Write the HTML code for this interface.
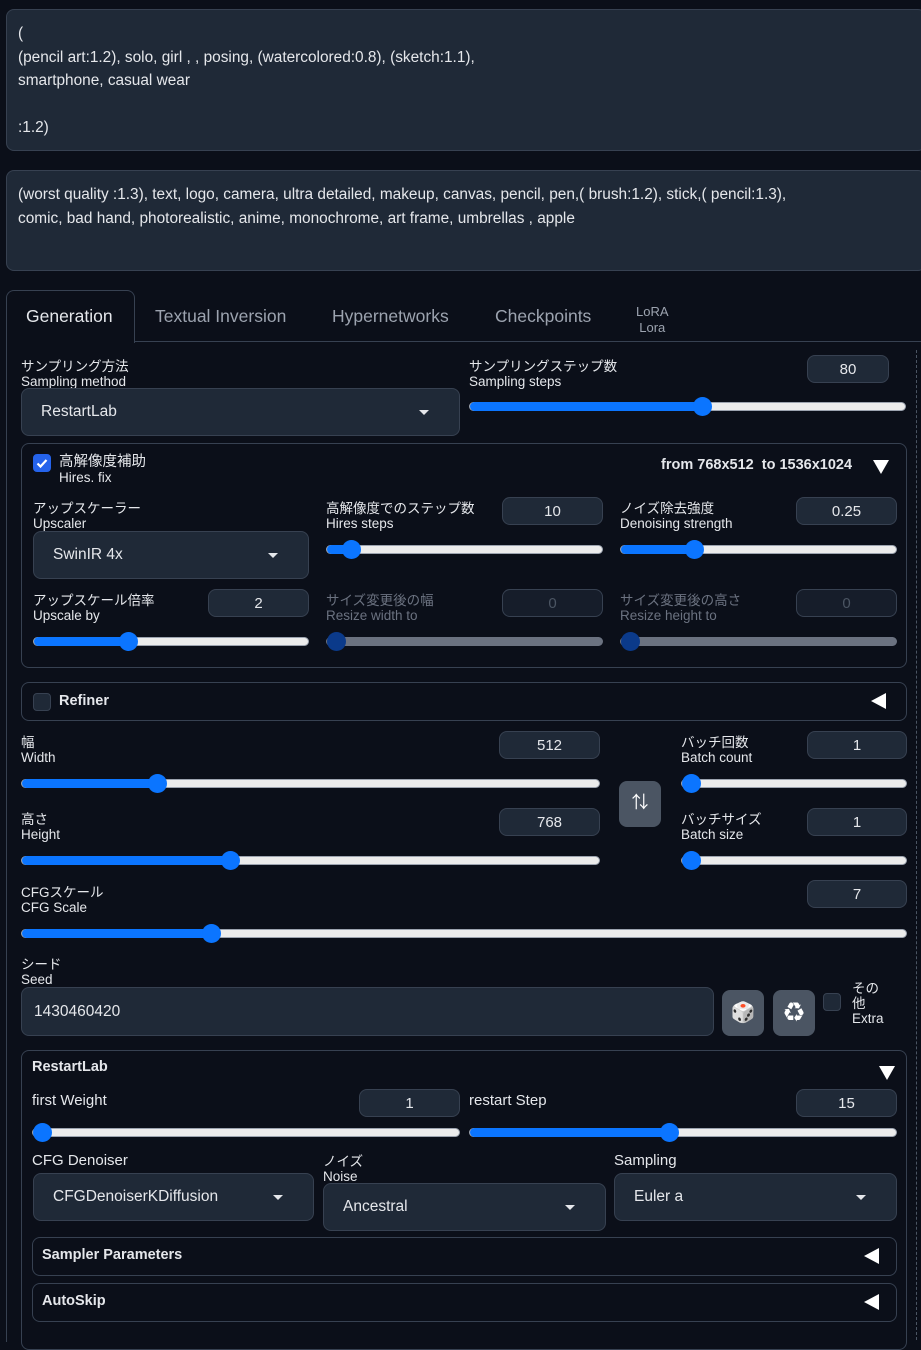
<!DOCTYPE html>
<html><head><meta charset="utf-8"><style>
*{box-sizing:border-box;margin:0;padding:0}
body{width:921px;height:1339px;background:#0b0f19;color:#e5e7eb;font-family:"Liberation Sans","Noto Sans CJK JP",sans-serif;position:relative;overflow:hidden}
.a{position:absolute}
.box{position:absolute;background:#1f2937;border:1px solid #374151;border-radius:8px}
.pbox{position:absolute;background:#1f2937;border:1px solid #374151;border-radius:8px;padding:12px 11px;font-size:15.4px;line-height:23.5px;color:#e5e7eb}
.frame{position:absolute;border:1px solid #374151;border-radius:8px}
.l{position:absolute;font-size:13.5px;line-height:15px;color:#e5e7eb}
.l.g{color:#6b7280}
.num{position:absolute;background:#1f2937;border:1px solid #374151;border-radius:8px;height:28px;text-align:center;font-size:15px;line-height:28px}
.num.g{color:#4b5563;background:#161d2a}
.tr{position:absolute;height:9px;background:#ececec;border-radius:5px;border:1px solid #9ca3af}
.tr i{position:absolute;left:0;top:-1px;height:9px;background:#0b75ff;border-radius:5px}
.tr b{position:absolute;top:-6px;width:19px;height:19px;margin-left:-9px;border-radius:50%;background:#0b75ff}
.tr.g{background:#6b7280;border-color:#6b7280}
.tr.g b{background:#0b3a8a}
.dd{position:absolute;background:#1f2937;border:1px solid #374151;border-radius:8px;height:48px;font-size:15.5px;line-height:46px;padding-left:19px}
.dd:after{content:"";position:absolute;right:30px;top:21px;border-left:5px solid transparent;border-right:5px solid transparent;border-top:5px solid #e5e7eb}
.cb{position:absolute;width:18px;height:18px;border-radius:4px;background:#1f2937;border:1px solid #374151}
.tl{position:absolute;width:0;height:0;border-top:8px solid transparent;border-bottom:8px solid transparent;border-right:15px solid #fff}
.td{position:absolute;width:0;height:0;border-left:8px solid transparent;border-right:8px solid transparent;border-top:14px solid #fff}
.btn{position:absolute;background:#4b5563;border-radius:8px;text-align:center;color:#fff}
.bold{font-weight:bold}
</style></head><body>

<div class="pbox" style="left:6px;top:9px;width:920px;height:142px">(<br>(pencil art:1.2), solo, girl , , posing, (watercolored:0.8), (sketch:1.1),<br>smartphone, casual wear<br><br>:1.2)</div>
<div class="pbox" style="left:6px;top:170px;width:920px;height:101px;padding-top:12px">(worst quality :1.3), text, logo, camera, ultra detailed, makeup, canvas, pencil, pen,( brush:1.2), stick,( pencil:1.3),<br>comic, bad hand, photorealistic,  anime, monochrome, art frame, umbrellas , apple</div>

<!-- tabs -->
<div class="a" style="left:134px;top:341px;width:787px;height:1px;background:#374151"></div>
<div class="a" style="left:6px;top:290px;width:129px;height:53px;border:1px solid #374151;border-bottom:none;border-radius:8px 8px 0 0;background:#0b0f19"></div>
<div class="a" style="left:26px;top:306px;font-size:17.5px;color:#e5e7eb">Generation</div>
<div class="a" style="left:155px;top:306px;font-size:17.5px;color:#9ca3af">Textual Inversion</div>
<div class="a" style="left:332px;top:306px;font-size:17.5px;color:#9ca3af">Hypernetworks</div>
<div class="a" style="left:495px;top:306px;font-size:17.5px;color:#9ca3af">Checkpoints</div>
<div class="a" style="left:636px;top:304px;font-size:13px;line-height:16px;color:#9ca3af;text-align:center">LoRA<br>Lora</div>
<div class="a" style="left:6px;top:342px;width:1px;height:1000px;background:#374151"></div>
<div class="a" style="left:916px;top:350px;width:0;height:990px;border-left:1px dashed #4b5563"></div>

<!-- sampling -->
<div class="l" style="left:21px;top:359px">サンプリング方法<br>Sampling method</div>
<div class="dd" style="left:21px;top:388px;width:439px">RestartLab</div>
<div class="l" style="left:469px;top:359px">サンプリングステップ数<br>Sampling steps</div>
<div class="num" style="left:807px;top:355px;width:82px">80</div>
<div class="tr" style="left:469px;top:402px;width:437px"><i style="width:232px"></i><b style="left:232px"></b></div>

<!-- hires -->
<div class="frame" style="left:21px;top:443px;width:886px;height:225px"></div>
<div class="cb" style="left:33px;top:454px;background:#2563eb;border-color:#2563eb"><svg width="16" height="16" viewBox="0 0 16 16"><path d="M3.5 8.5l3 3 6-6.5" stroke="#fff" stroke-width="2.2" fill="none"/></svg></div>
<div class="l" style="left:59px;top:455px;font-size:14.5px">高解像度補助<br><span style="font-size:13.5px">Hires. fix</span></div>
<div class="a bold" style="left:661px;top:457px;font-size:14.5px">from 768x512&nbsp; to 1536x1024</div>
<div class="td" style="left:873px;top:460px"></div>

<div class="l" style="left:33px;top:501px">アップスケーラー<br>Upscaler</div>
<div class="dd" style="left:33px;top:531px;width:276px">SwinIR 4x</div>
<div class="l" style="left:326px;top:501px">高解像度でのステップ数<br>Hires steps</div>
<div class="num" style="left:502px;top:497px;width:101px">10</div>
<div class="tr" style="left:326px;top:545px;width:277px"><i style="width:24px"></i><b style="left:24px"></b></div>
<div class="l" style="left:620px;top:501px">ノイズ除去強度<br>Denoising strength</div>
<div class="num" style="left:796px;top:497px;width:101px">0.25</div>
<div class="tr" style="left:620px;top:545px;width:277px"><i style="width:73px"></i><b style="left:73px"></b></div>

<div class="l" style="left:33px;top:593px">アップスケール倍率<br>Upscale by</div>
<div class="num" style="left:208px;top:589px;width:101px">2</div>
<div class="tr" style="left:33px;top:637px;width:276px"><i style="width:94px"></i><b style="left:94px"></b></div>
<div class="l g" style="left:326px;top:593px">サイズ変更後の幅<br>Resize width to</div>
<div class="num g" style="left:502px;top:589px;width:101px">0</div>
<div class="tr g" style="left:326px;top:637px;width:277px"><b style="left:9px"></b></div>
<div class="l g" style="left:620px;top:593px">サイズ変更後の高さ<br>Resize height to</div>
<div class="num g" style="left:796px;top:589px;width:101px">0</div>
<div class="tr g" style="left:620px;top:637px;width:277px"><b style="left:9px"></b></div>

<!-- refiner -->
<div class="frame" style="left:21px;top:682px;width:886px;height:39px"></div>
<div class="cb" style="left:33px;top:693px"></div>
<div class="a bold" style="left:59px;top:693px;font-size:14.5px">Refiner</div>
<div class="tl" style="left:871px;top:693px"></div>

<!-- width/height -->
<div class="l" style="left:21px;top:735px">幅<br>Width</div>
<div class="num" style="left:499px;top:731px;width:101px">512</div>
<div class="tr" style="left:21px;top:779px;width:579px"><i style="width:135px"></i><b style="left:135px"></b></div>
<div class="l" style="left:21px;top:812px">高さ<br>Height</div>
<div class="num" style="left:499px;top:808px;width:101px">768</div>
<div class="tr" style="left:21px;top:856px;width:579px"><i style="width:208px"></i><b style="left:208px"></b></div>
<div class="btn" style="left:619px;top:781px;width:42px;height:46px;line-height:44px;font-size:17px">⇅</div>
<div class="l" style="left:681px;top:735px">バッチ回数<br>Batch count</div>
<div class="num" style="left:807px;top:731px;width:100px">1</div>
<div class="tr" style="left:681px;top:779px;width:226px"><b style="left:9px"></b></div>
<div class="l" style="left:681px;top:812px">バッチサイズ<br>Batch size</div>
<div class="num" style="left:807px;top:808px;width:100px">1</div>
<div class="tr" style="left:681px;top:856px;width:226px"><b style="left:9px"></b></div>

<div class="l" style="left:21px;top:885px">CFGスケール<br>CFG Scale</div>
<div class="num" style="left:807px;top:880px;width:100px">7</div>
<div class="tr" style="left:21px;top:929px;width:886px"><i style="width:189px"></i><b style="left:189px"></b></div>

<!-- seed -->
<div class="l" style="left:21px;top:957px">シード<br>Seed</div>
<div class="box" style="left:21px;top:987px;width:693px;height:49px;font-size:15.5px;line-height:47px;padding-left:12px">1430460420</div>
<div class="btn" style="left:722px;top:990px;width:42px;height:46px;line-height:46px;font-size:20px">🎲</div>
<div class="btn" style="left:773px;top:990px;width:42px;height:46px;line-height:46px;font-size:20px">♻</div>
<div class="cb" style="left:823px;top:993px"></div>
<div class="l" style="left:852px;top:981px;line-height:15px">その<br>他<br>Extra</div>

<!-- restartlab -->
<div class="frame" style="left:21px;top:1050px;width:886px;height:300px"></div>
<div class="a bold" style="left:32px;top:1059px;font-size:14.5px">RestartLab</div>
<div class="td" style="left:879px;top:1066px"></div>
<div class="a" style="left:32px;top:1092px;font-size:15px">first Weight</div>
<div class="num" style="left:359px;top:1089px;width:101px">1</div>
<div class="tr" style="left:32px;top:1128px;width:428px"><b style="left:9px"></b></div>
<div class="a" style="left:469px;top:1092px;font-size:15px">restart Step</div>
<div class="num" style="left:796px;top:1089px;width:101px">15</div>
<div class="tr" style="left:469px;top:1128px;width:428px"><i style="width:199px"></i><b style="left:199px"></b></div>

<div class="a" style="left:32px;top:1152px;font-size:15px">CFG Denoiser</div>
<div class="dd" style="left:33px;top:1173px;width:281px">CFGDenoiserKDiffusion</div>
<div class="l" style="left:323px;top:1154px">ノイズ<br>Noise</div>
<div class="dd" style="left:323px;top:1183px;width:283px">Ancestral</div>
<div class="a" style="left:614px;top:1152px;font-size:15px">Sampling</div>
<div class="dd" style="left:614px;top:1173px;width:283px">Euler a</div>

<div class="frame" style="left:32px;top:1237px;width:865px;height:39px"></div>
<div class="a bold" style="left:42px;top:1247px;font-size:14.5px">Sampler Parameters</div>
<div class="tl" style="left:864px;top:1248px"></div>
<div class="frame" style="left:32px;top:1283px;width:865px;height:39px"></div>
<div class="a bold" style="left:42px;top:1293px;font-size:14.5px">AutoSkip</div>
<div class="tl" style="left:864px;top:1294px"></div>
</body></html>
